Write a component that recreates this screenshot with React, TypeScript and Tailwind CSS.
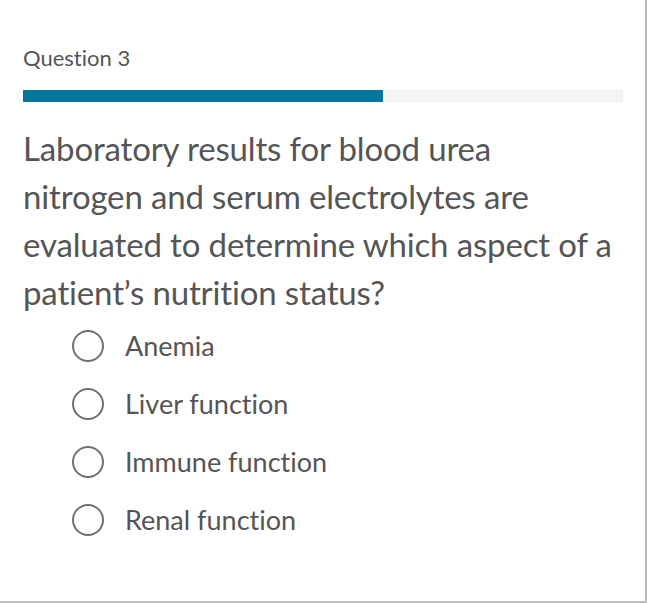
import React from 'react';

const options = ['Anemia', 'Liver function', 'Immune function', 'Renal function'];

const questionLines = [
  'Laboratory results for blood urea',
  'nitrogen and serum electrolytes are',
  'evaluated to determine which aspect of a',
  'patient’s nutrition status?',
];

const App: React.FC = () => {
  return (
    <div className="w-[647px] h-[603px] bg-white border-r-2 border-b-2 border-[#bdbdbd] font-['Lato',sans-serif] text-[#555555] [font-variant-ligatures:no-common-ligatures]">
      <div className="pl-[23px] pt-[44px]">
        <h2 className="text-[22px] leading-[28px]">Question 3</h2>

        {/* progress */}
        <div className="mt-[18px] w-[600px] h-[12px] bg-[#f3f3f3]">
          <div className="h-full w-[360px] bg-[#04759b]" />
        </div>

        <p className="mt-[22px] w-[610px] whitespace-nowrap text-[33px] leading-[48px] tracking-[-0.15px]">
          {questionLines.map((line, i) => (
            <React.Fragment key={i}>
              {line}
              {i < questionLines.length - 1 && <br />}
            </React.Fragment>
          ))}
        </p>

        <ul className="mt-[12px] pl-[49px] flex flex-col gap-[22px]">
          {options.map((opt) => (
            <li key={opt} className="flex items-center gap-[21px] h-[36px]">
              <span className="w-[32px] h-[32px] rounded-full border-[2.5px] border-[#707070] shrink-0" />
              <span className="text-[27px] leading-[36px]">{opt}</span>
            </li>
          ))}
        </ul>
      </div>
    </div>
  );
};

export default App;
